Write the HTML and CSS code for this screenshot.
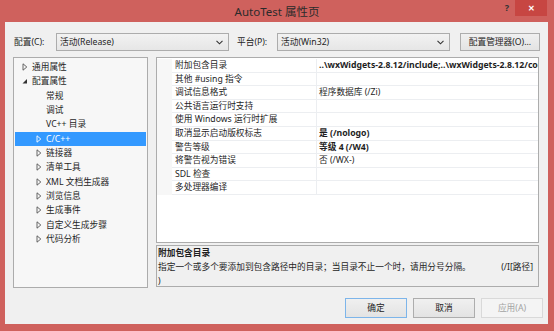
FILE: index.html
```html
<!DOCTYPE html>
<html lang="zh-CN">
<head>
<meta charset="utf-8">
<title>AutoTest 属性页</title>
<link rel="stylesheet" href="styles.css">
</head>
<body>
<div class="window">
  <div class="titlebar">
    <span class="title">AutoTest 属性页</span>
    <span class="help">?</span>
    <span class="close">✕</span>
  </div>
  <div class="client">
    <div class="toprow">
      <span class="lbl lbl1">配置(C):</span>
      <div class="select">
        <span>活动(Release)</span>
        <svg class="chev" width="7" height="5" viewBox="0 0 7 5"><polyline points="0.5,0.8 3.5,3.8 6.5,0.8" fill="none" stroke="#333" stroke-width="1.1"/></svg>
      </div>
      <span class="lbl lbl2">平台(P):</span>
      <div class="select">
        <span>活动(Win32)</span>
        <svg class="chev" width="7" height="5" viewBox="0 0 7 5"><polyline points="0.5,0.8 3.5,3.8 6.5,0.8" fill="none" stroke="#333" stroke-width="1.1"/></svg>
      </div>
      <div class="btn cfgbtn">配置管理器(O)...</div>
    </div>

    <div class="main">
      <div class="tree">
        <div class="node"><svg class="arr" width="6" height="8" viewBox="0 0 6 8"><polygon points="1,0.8 4.8,4 1,7.2" fill="none" stroke="#555" stroke-width="0.9"/></svg><span>通用属性</span></div>
        <div class="node"><svg class="arr" width="6" height="8" viewBox="0 0 6 8"><polygon points="5,2 5,6.5 0.5,6.5" fill="#333"/></svg><span>配置属性</span></div>
        <div class="node lvl1"><span class="noarr"></span><span>常规</span></div>
        <div class="node lvl1"><span class="noarr"></span><span>调试</span></div>
        <div class="node lvl1"><span class="noarr"></span><span>VC++ 目录</span></div>
        <div class="node lvl1 sel"><svg class="arr" width="6" height="8" viewBox="0 0 6 8"><polygon points="1,0.8 4.8,4 1,7.2" fill="none" stroke="#fff" stroke-width="0.9"/></svg><span>C/C++</span></div>
        <div class="node lvl1"><svg class="arr" width="6" height="8" viewBox="0 0 6 8"><polygon points="1,0.8 4.8,4 1,7.2" fill="none" stroke="#555" stroke-width="0.9"/></svg><span>链接器</span></div>
        <div class="node lvl1"><svg class="arr" width="6" height="8" viewBox="0 0 6 8"><polygon points="1,0.8 4.8,4 1,7.2" fill="none" stroke="#555" stroke-width="0.9"/></svg><span>清单工具</span></div>
        <div class="node lvl1"><svg class="arr" width="6" height="8" viewBox="0 0 6 8"><polygon points="1,0.8 4.8,4 1,7.2" fill="none" stroke="#555" stroke-width="0.9"/></svg><span>XML 文档生成器</span></div>
        <div class="node lvl1"><svg class="arr" width="6" height="8" viewBox="0 0 6 8"><polygon points="1,0.8 4.8,4 1,7.2" fill="none" stroke="#555" stroke-width="0.9"/></svg><span>浏览信息</span></div>
        <div class="node lvl1"><svg class="arr" width="6" height="8" viewBox="0 0 6 8"><polygon points="1,0.8 4.8,4 1,7.2" fill="none" stroke="#555" stroke-width="0.9"/></svg><span>生成事件</span></div>
        <div class="node lvl1"><svg class="arr" width="6" height="8" viewBox="0 0 6 8"><polygon points="1,0.8 4.8,4 1,7.2" fill="none" stroke="#555" stroke-width="0.9"/></svg><span>自定义生成步骤</span></div>
        <div class="node lvl1"><svg class="arr" width="6" height="8" viewBox="0 0 6 8"><polygon points="1,0.8 4.8,4 1,7.2" fill="none" stroke="#555" stroke-width="0.9"/></svg><span>代码分析</span></div>
      </div>

      <div class="rightcol">
        <div class="grid">
          <div class="row"><span class="gut"></span><span class="name">附加包含目录</span><span class="val b">..\wxWidgets-2.8.12/include;..\wxWidgets-2.8.12/contrib/include;%(AdditionalIncludeDirectories)</span></div>
          <div class="row"><span class="gut"></span><span class="name">其他 #using 指令</span><span class="val"></span></div>
          <div class="row"><span class="gut"></span><span class="name">调试信息格式</span><span class="val">程序数据库 (/Zi)</span></div>
          <div class="row"><span class="gut"></span><span class="name">公共语言运行时支持</span><span class="val"></span></div>
          <div class="row"><span class="gut"></span><span class="name">使用 Windows 运行时扩展</span><span class="val"></span></div>
          <div class="row"><span class="gut"></span><span class="name">取消显示启动版权标志</span><span class="val b">是 (/nologo)</span></div>
          <div class="row"><span class="gut"></span><span class="name">警告等级</span><span class="val b">等级 4 (/W4)</span></div>
          <div class="row"><span class="gut"></span><span class="name">将警告视为错误</span><span class="val">否 (/WX-)</span></div>
          <div class="row"><span class="gut"></span><span class="name">SDL 检查</span><span class="val"></span></div>
          <div class="row"><span class="gut"></span><span class="name">多处理器编译</span><span class="val"></span></div>
        </div>
        <div class="desc">
          <div class="dtitle">附加包含目录</div>
          <div class="dline"><span>指定一个或多个要添加到包含路径中的目录；当目录不止一个时，请用分号分隔。</span><span>(/I[路径]</span></div>
          <div class="dline">)</div>
        </div>
      </div>
    </div>

    <div class="buttons">
      <div class="btn dbtn focus">确定</div>
      <div class="btn dbtn">取消</div>
      <div class="btn dbtn disabled">应用(A)</div>
    </div>
  </div>
</div>
</body>
</html>
```

FILE: styles.css
```css
* { box-sizing: border-box; }
html, body { margin: 0; padding: 0; }
body {
  width: 554px;
  height: 331px;
  overflow: hidden;
  font-family: "Noto Sans", "Noto Sans CJK SC", sans-serif;
  font-size: 8.7px;
  color: #1e1e1e;
}
.window {
  width: 554px;
  height: 331px;
  background: #cf615d;
  padding: 0 6px 7px 5px;
  display: flex;
  flex-direction: column;
}
.titlebar {
  height: 22px;
  position: relative;
  text-align: center;
  line-height: 23px;
  margin: 0 -6px 0 -5px;
}
.title {
  font-size: 11.5px;
  color: #2b2b2b;
}
.help {
  position: absolute;
  top: 0;
  left: 502px;
  width: 10px;
  line-height: 16px;
  font-size: 9px;
  font-weight: bold;
  color: #333;
}
.close {
  position: absolute;
  top: 0;
  left: 515px;
  width: 32px;
  height: 16px;
  line-height: 16px;
  background: #c74642;
  color: #fff;
  font-size: 8px;
  font-weight: bold;
}
.client {
  flex: 1;
  min-height: 0;
  background: #f0f0f0;
  padding: 11px 5px 0 8px;
  display: flex;
  flex-direction: column;
}
.toprow {
  height: 18px;
  display: flex;
  align-items: center;
  line-height: 18px;
}
.lbl1 { margin-left: 1px; width: 42px; flex: none; }
.lbl2 { margin-left: 8px; width: 40px; flex: none; }
.select {
  width: 173px;
  flex: none;
  height: 18px;
  border: 1px solid #acacac;
  background: linear-gradient(#f2f2f2, #e6e6e6);
  display: flex;
  align-items: center;
  justify-content: space-between;
  padding: 0 5px 0 3px;
  line-height: 16px;
}
.chev { display: block; }
.btn {
  border: 1px solid #adadad;
  background: linear-gradient(#f0f0f0, #e3e3e3);
  text-align: center;
  line-height: 16px;
  height: 18px;
}
.cfgbtn { margin-left: 10px; width: 80px; flex: none; }
.main {
  margin-top: 6px;
  margin-right: 4px;
  display: flex;
  gap: 8px;
  height: 231px;
  min-width: 0;
}
.tree {
  width: 135px;
  flex: none;
  height: 231px;
  border: 1px solid #acacac;
  background: #f7f7f7;
  padding-top: 2px;
}
.node {
  height: 14.33px;
  line-height: 14.33px;
  margin: 0 1px;
  padding-left: 7px;
  display: flex;
  align-items: center;
  white-space: nowrap;
  color: #1e1e1e;
}
.node.lvl1 { padding-left: 21px; }
.node .arr { display: block; width: 6px; height: 8px; margin-right: 4px; flex: none; }
.node .noarr { width: 10px; flex: none; }
.node.sel { background: #3399ff; color: #fff; }
.rightcol {
  flex: 1;
  min-width: 0;
  display: flex;
  flex-direction: column;
  gap: 2px;
}
.grid {
  height: 186px;
  border: 1px solid #acacac;
  background: #fff;
  padding-top: 1px;
  overflow: hidden;
}
.row {
  height: 13.6px;
  line-height: 13.6px;
  display: flex;
  white-space: nowrap;
}
.gut {
  width: 15px;
  flex: none;
  background: #f7f7f7;
}
.name {
  width: 145px;
  flex: none;
  padding-left: 3px;
  border-bottom: 1px solid #eceef1;
  border-right: 1px solid #eceef1;
  overflow: hidden;
}
.val {
  flex: 1;
  min-width: 0;
  padding-left: 2px;
  border-bottom: 1px solid #eceef1;
  overflow: hidden;
}
.b { font-weight: bold; }
.desc {
  height: 42px;
  border: 1px solid #acacac;
  background: #f0f0f0;
  padding: 0 5px 0 1px;
  line-height: 14px;
  overflow: hidden;
}
.dtitle { font-weight: bold; }
.dline { display: flex; justify-content: space-between; white-space: nowrap; }
.buttons {
  margin-top: 10px;
  display: flex;
  justify-content: flex-end;
  gap: 6px;
}
.dbtn {
  width: 62px;
  height: 20px;
  line-height: 18px;
}
.dbtn.focus { border-color: #7db5ea; }
.dbtn.disabled {
  border-color: #d9d9d9;
  background: #f4f4f4;
  color: #a3a3a3;
}
```
